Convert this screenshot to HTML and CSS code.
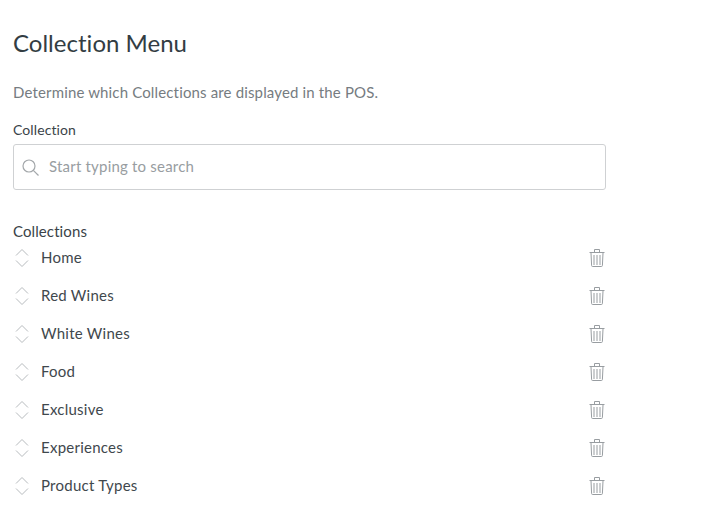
FILE: index.html
```html
<!DOCTYPE html>
<html lang="en">
<head>
<meta charset="utf-8">
<title>Collection Menu</title>
<link rel="stylesheet" href="styles.css">
</head>
<body>
<svg class="defs" width="0" height="0" aria-hidden="true">
  <symbol id="i-sort" viewBox="0 0 14 18"><path d="M1 6.500l6-6 6 6M1 11.500l6 6 6-6" fill="none" stroke="#b6babd"/></symbol>
  <symbol id="i-trash" viewBox="0 0 16 18"><path d="M.5 3.500h15M5.500 3V.5h5V3M2 4l.6 12.500a1 1 0 0 0 1 1h8.800a1 1 0 0 0 1-1L14 4M5 6v10M8 6v10M11 6v10" fill="none" stroke="#989da1"/></symbol>
</svg>
<main class="page">
  <h1 class="title">Collection Menu</h1>
  <p class="desc">Determine which Collections are displayed in the POS.</p>
  <label class="label" for="search">Collection</label>
  <div class="search">
    <svg class="search-icon" width="17" height="17" viewBox="0 0 17 17" fill="none" stroke="#a3a7aa" stroke-width="1.200"><circle cx="7" cy="7" r="6"/><path d="M11.300 11.300l5.200 5.200"/></svg>
    <input id="search" class="search-input" type="text" placeholder="Start typing to search">
  </div>
  <div class="list-label">Collections</div>
  <ul class="list">
    <li class="row"><svg class="sort" width="14" height="18"><use href="#i-sort"/></svg><span class="name">Home</span><svg class="trash" width="16" height="18"><use href="#i-trash"/></svg></li>
    <li class="row"><svg class="sort" width="14" height="18"><use href="#i-sort"/></svg><span class="name">Red Wines</span><svg class="trash" width="16" height="18"><use href="#i-trash"/></svg></li>
    <li class="row"><svg class="sort" width="14" height="18"><use href="#i-sort"/></svg><span class="name">White Wines</span><svg class="trash" width="16" height="18"><use href="#i-trash"/></svg></li>
    <li class="row"><svg class="sort" width="14" height="18"><use href="#i-sort"/></svg><span class="name">Food</span><svg class="trash" width="16" height="18"><use href="#i-trash"/></svg></li>
    <li class="row"><svg class="sort" width="14" height="18"><use href="#i-sort"/></svg><span class="name">Exclusive</span><svg class="trash" width="16" height="18"><use href="#i-trash"/></svg></li>
    <li class="row"><svg class="sort" width="14" height="18"><use href="#i-sort"/></svg><span class="name">Experiences</span><svg class="trash" width="16" height="18"><use href="#i-trash"/></svg></li>
    <li class="row"><svg class="sort" width="14" height="18"><use href="#i-sort"/></svg><span class="name">Product Types</span><svg class="trash" width="16" height="18"><use href="#i-trash"/></svg></li>
  </ul>
</main>
</body>
</html>
```
FILE: styles.css
```css
* { box-sizing: border-box; }
html, body { margin: 0; background: #fff; }
body { font-family: "Lato", "Open Sans", sans-serif; color: #2f3a40; overflow: hidden; }
.defs { position: absolute; }
.page { width: 606px; margin-left: 13px; padding-top: 27px; }
.title { margin: 0; font-size: 24px; line-height: 32px; font-weight: 400; letter-spacing: 0.02px; color: #333d43; }
.desc { margin: 22px 0 0; font-size: 15px; line-height: 22px; letter-spacing: 0.15px; color: #767c81; }
.label { display: block; margin-top: 17px; font-size: 14px; line-height: 20px; letter-spacing: 0.1px; color: #3a4348; }
.search { margin-top: 4px; width: 593px; height: 46px; display: flex; align-items: center; gap: 10px; padding-left: 8px; border: 1px solid #cfd1d3; border-radius: 3px; }
.search-input { flex: 1; border: 0; outline: 0; padding: 0 0 2px; font: 15px "Lato", sans-serif; letter-spacing: 0.2px; color: #2f3a40; background: transparent; }
.search-input::placeholder { color: #989da1; opacity: 1; }
.list-label { margin-top: 33px; font-size: 15px; line-height: 16px; letter-spacing: 0.1px; color: #3a4348; }
.list { list-style: none; margin: 0; padding: 0; width: 593px; }
.row { height: 38px; display: flex; align-items: center; font-size: 15px; letter-spacing: 0.25px; }
.sort { margin-left: 2px; }
.name { margin-left: 12px; flex: 1; padding-bottom: 3px; color: #3f484d; }
.trash { margin-right: 1px; }
```
